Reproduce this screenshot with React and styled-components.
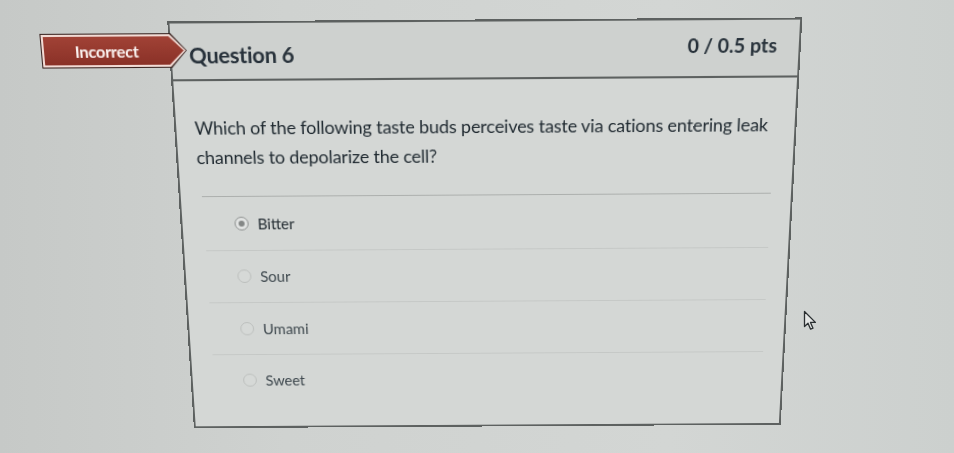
import React from "react";
import styled, { createGlobalStyle } from "styled-components";

const GlobalStyle = createGlobalStyle`
  html, body {
    margin: 0;
    padding: 0;
  }
  body {
    width: 954px;
    height: 453px;
    overflow: hidden;
    font-family: Lato, "Open Sans", "Liberation Sans", sans-serif;
    background: linear-gradient(90deg, #c6c9c7 0%, #cfd2d0 30%, #d3d6d4 70%, #ccd0ce 100%);
  }
`;

const Page = styled.div`
  position: relative;
  width: 954px;
  height: 453px;
  padding: 24px 0 0 181px;
  box-sizing: border-box;
`;

const Card = styled.div`
  position: relative;
  width: 610px;
  height: 414px;
  box-sizing: border-box;
  border: 2px solid #5d6160;
  background: #d4d7d5;
  color: #27313a;
  transform-origin: 50% 50%;
  transform: perspective(1000px) rotateX(-11deg) rotate(-0.35deg);
`;

const Header = styled.div`
  display: flex;
  justify-content: space-between;
  align-items: flex-start;
  height: 53px;
  padding: 0 21px 0 17px;
  border-bottom: 2px solid #5d6160;
  background: #ced1cf;
`;

const QuestionName = styled.div`
  margin-top: 17px;
  font-size: 21px;
  font-weight: 700;
  letter-spacing: -0.2px;
`;

const Points = styled.div`
  margin-top: 12px;
  font-size: 19px;
  font-weight: 700;
`;

const Badge = styled.div`
  position: absolute;
  left: -126px;
  top: 9px;
  width: 141px;
  height: 33px;
  padding: 1px;
  box-sizing: border-box;
  background: #3b2522;
  clip-path: polygon(0 0, 126px 0, 141px 50%, 126px 100%, 0 100%);
`;

const BadgeRing = styled.div`
  height: 100%;
  padding: 2px;
  box-sizing: border-box;
  background: #f2dbd5;
  clip-path: polygon(0 0, calc(100% - 15px) 0, 100% 50%, calc(100% - 15px) 100%, 0 100%);
`;

const BadgeFill = styled.div`
  display: flex;
  align-items: center;
  justify-content: center;
  height: 100%;
  padding-right: 14px;
  box-sizing: border-box;
  background: linear-gradient(180deg, #a14236, #8a3127);
  clip-path: polygon(0 0, calc(100% - 14px) 0, 100% 50%, calc(100% - 14px) 100%, 0 100%);
  color: #fbf3f1;
  font-size: 16px;
  font-weight: 700;
  letter-spacing: -0.3px;
`;

const Body = styled.div`
  padding: 32px 20px 0 18px;
`;

const QuestionText = styled.p`
  margin: 0;
  width: 580px;
  font-size: 17.7px;
  line-height: 28.5px;
  font-weight: 400;
  color: #1f2930;
  letter-spacing: -0.15px;
`;

const Divider = styled.div`
  margin: 24px 0 0 3px;
  height: 1px;
  background: #acafad;
`;

const AnswerList = styled.div`
  display: flex;
  flex-direction: column;
`;

const AnswerRow = styled.div`
  display: flex;
  align-items: center;
  gap: 9px;
  height: 54.5px;
  padding-left: 30px;
  box-sizing: border-box;
  margin: 0 0 0 4px;
  border-bottom: ${(p) => (p.$last ? "none" : "1px solid #c5c8c6")};
`;

const Radio = styled.span`
  position: relative;
  width: 14px;
  height: 14px;
  border-radius: 50%;
  box-sizing: border-box;
  border: 1px solid ${(p) => (p.$checked ? "#8d908f" : "#bcbfbd")};
  background: ${(p) => (p.$checked ? "#e2e4e3" : "#d6d9d7")};

  &::after {
    content: "";
    display: ${(p) => (p.$checked ? "block" : "none")};
    position: absolute;
    left: 50%;
    top: 50%;
    width: 6px;
    height: 6px;
    margin: -3px 0 0 -3px;
    border-radius: 50%;
    background: #848786;
  }
`;

const AnswerLabel = styled.span`
  font-size: 15px;
  color: ${(p) => (p.$checked ? "#222b31" : "#3e484e")};
`;

const Cursor = styled.svg`
  position: absolute;
  left: 803px;
  top: 310px;
`;

const answers = [
  { label: "Bitter", checked: true },
  { label: "Sour" },
  { label: "Umami" },
  { label: "Sweet" },
];

export default function App() {
  return (
    <>
      <GlobalStyle />
      <Page>
        <Card>
          <Badge>
            <BadgeRing>
              <BadgeFill>Incorrect</BadgeFill>
            </BadgeRing>
          </Badge>
          <Header>
            <QuestionName>Question 6</QuestionName>
            <Points>0 / 0.5 pts</Points>
          </Header>
          <Body>
            <QuestionText>
              Which of the following taste buds perceives taste via cations
              entering leak channels to depolarize the cell?
            </QuestionText>
            <Divider />
            <AnswerList>
              {answers.map((a, i) => (
                <AnswerRow key={a.label} $last={i === answers.length - 1}>
                  <Radio $checked={a.checked} />
                  <AnswerLabel $checked={a.checked}>{a.label}</AnswerLabel>
                </AnswerRow>
              ))}
            </AnswerList>
          </Body>
        </Card>
        <Cursor width="16" height="22" viewBox="0 0 16 22">
          <path
            d="M1.5 1.5 L1.5 16.5 L5 13.2 L7.6 19.2 L10 18.2 L7.5 12.4 L12.4 12.4 Z"
            fill="#e4e6e5"
            stroke="#2a2f31"
            strokeWidth="1.3"
            strokeLinejoin="round"
          />
        </Cursor>
      </Page>
    </>
  );
}
